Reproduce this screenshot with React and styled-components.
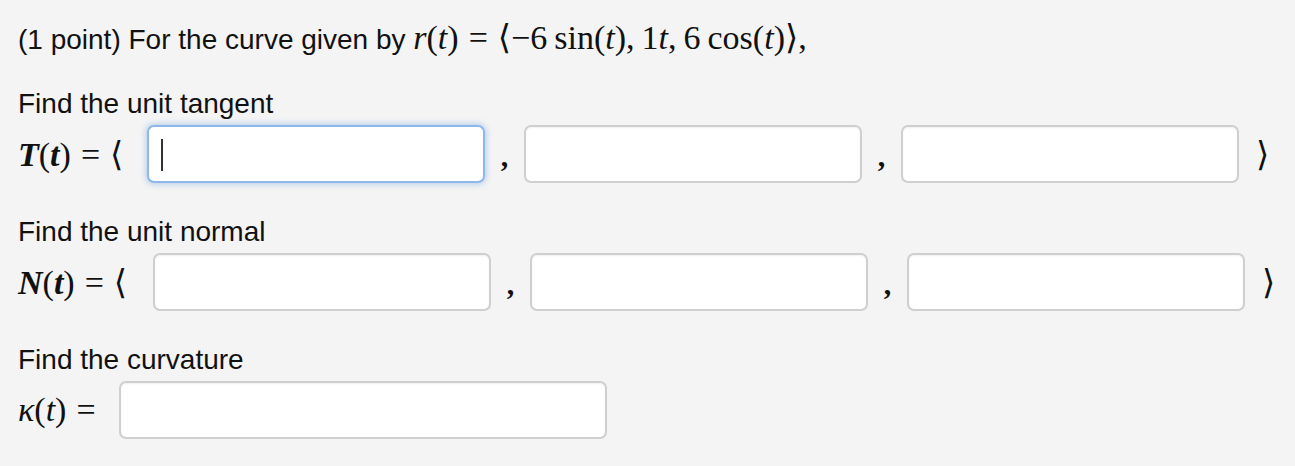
import styled, { createGlobalStyle } from "styled-components";

const GlobalStyle = createGlobalStyle`
  html, body {
    margin: 0;
    padding: 0;
    background: #f4f4f4;
  }
`;

export default function App() {
  return (
    <>
      <GlobalStyle />
      <Page>
        <Title>
          (1 point) For the curve given by{" "}
          <Math>
            <I>r</I>(<I>t</I>)<Eq>=</Eq>⟨−6<Sp />sin(<I>t</I>),<Sp />1<I>t</I>,<Sp />6<Sp />cos(<I>t</I>)⟩,
          </Math>
        </Title>

        <Label>Find the unit tangent</Label>
        <Row>
          <MathLabel width={129}>
            <Bold>T</Bold>(<Bold>t</Bold>)<Eq>=</Eq>⟨
          </MathLabel>
          <Field focused>
            <Caret />
          </Field>
          <Sep>,</Sep>
          <Field />
          <Sep>,</Sep>
          <Field />
          <Close>⟩</Close>
        </Row>

        <Label>Find the unit normal</Label>
        <Row>
          <MathLabel width={135}>
            <Bold>N</Bold>(<Bold>t</Bold>)<Eq>=</Eq>⟨
          </MathLabel>
          <Field />
          <Sep>,</Sep>
          <Field />
          <Sep>,</Sep>
          <Field />
          <Close>⟩</Close>
        </Row>

        <Label>Find the curvature</Label>
        <Row>
          <MathLabel width={101}>
            <I>κ</I>(<I>t</I>)<Eq>=</Eq>
          </MathLabel>
          <Field wide />
        </Row>
      </Page>
    </>
  );
}

const Page = styled.div`
  padding: 18px 18px 0 18px;
  font-family: "Liberation Sans", Arial, sans-serif;
  color: #111;
`;

const Title = styled.div`
  font-size: 28px;
  line-height: 40px;
  height: 40px;
  white-space: nowrap;
`;

const Math = styled.span`
  font-family: "Liberation Serif", "DejaVu Serif", serif;
  font-size: 34px;
`;

const I = styled.i`
  font-style: italic;
`;

const Bold = styled.i`
  font-style: italic;
  font-weight: bold;
`;

const Eq = styled.span`
  margin: 0 10px;
`;

const Sp = styled.span`
  display: inline-block;
  width: 7px;
`;

const Label = styled.div`
  font-size: 28px;
  line-height: 32px;
  margin-top: 30px;

  & ~ & {
    margin-top: 33px;
  }
`;

const Row = styled.div`
  display: flex;
  align-items: center;
  margin-top: 5px;
  height: 58px;
`;

const MathLabel = styled.div`
  width: ${(p) => p.width}px;
  flex: none;
  font-family: "Liberation Serif", "DejaVu Serif", serif;
  font-size: 34px;
  white-space: nowrap;
`;

const Field = styled.div`
  position: relative;
  box-sizing: border-box;
  width: ${(p) => (p.wide ? 488 : 338)}px;
  height: 58px;
  background: #fff;
  border: 2px solid ${(p) => (p.focused ? "#8fb8ea" : "#cfcfcf")};
  border-radius: 7px;
  box-shadow: ${(p) =>
    p.focused
      ? "0 0 6px 1px rgba(100, 150, 220, 0.45)"
      : "inset 0 1px 2px rgba(0, 0, 0, 0.06)"};
  flex: none;
`;

const Caret = styled.span`
  position: absolute;
  left: 12px;
  top: 12px;
  width: 2px;
  height: 32px;
  background: #333;
`;

const Sep = styled.div`
  width: 39px;
  text-align: center;
  font-family: "Liberation Serif", "DejaVu Serif", serif;
  font-size: 30px;
  font-weight: bold;
  line-height: 58px;
  padding-top: 4px;
  flex: none;
`;

const Close = styled.div`
  margin-left: 17px;
  font-family: "Liberation Serif", "DejaVu Serif", serif;
  font-size: 34px;
`;
